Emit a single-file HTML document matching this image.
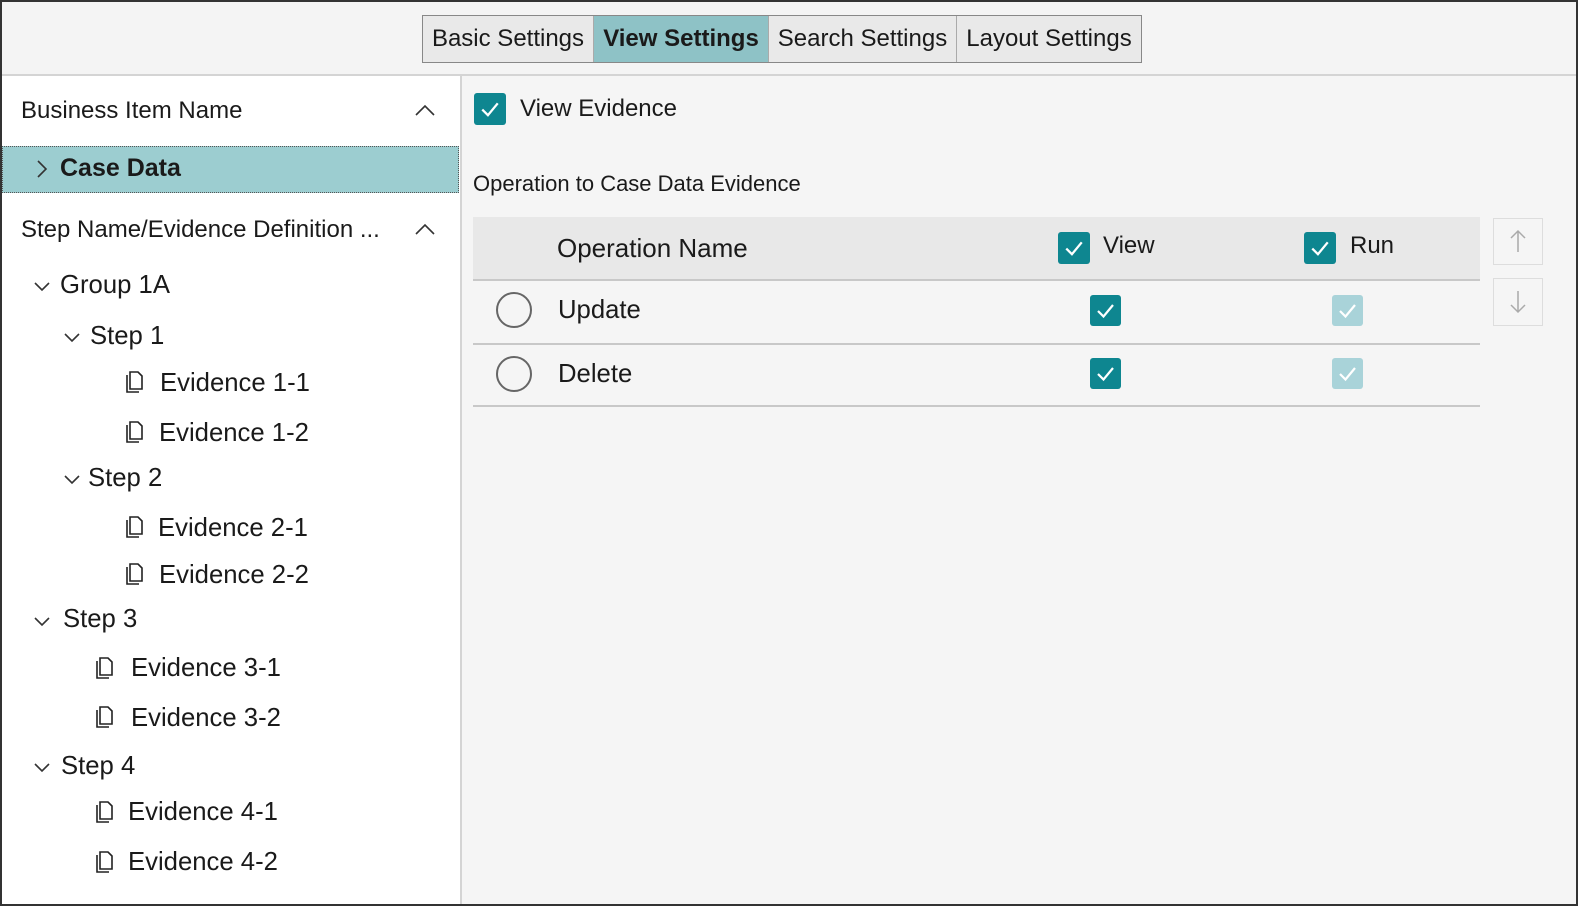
<!DOCTYPE html>
<html><head><meta charset="utf-8"><style>
*{margin:0;padding:0;box-sizing:border-box}
body{width:1578px;height:906px;position:relative;overflow:hidden;font-family:"Liberation Sans",sans-serif;color:#1a1a1a;background:#fff}
.a{position:absolute;white-space:nowrap}
.t{font-size:24px;line-height:30px}
.tr{font-size:25.7px;line-height:30px}
.cb{position:absolute;width:31px;height:31px;background:#0e8690;border-radius:3px}
.cb.l{background:#a9d3d9}
.cb svg{position:absolute;left:0;top:0}
</style></head><body>
<div class="a" style="left:0;top:0;width:1578px;height:906px;border:2px solid #333;z-index:10;pointer-events:none"></div>
<div class="a" style="left:0;top:0;width:1578px;height:76px;background:#f4f4f4;border-bottom:2px solid #d4d4d4"></div>
<div class="a" style="left:422px;top:15px;width:720px;height:48px;border:1px solid #888;background:#e9e9e9;display:flex;font-size:24px;line-height:46px">
<div style="width:171px;text-align:center;border-right:1px solid #aaa">Basic Settings</div>
<div style="width:175px;text-align:center;background:#8ec2c6;font-weight:bold;border-right:1px solid #aaa">View Settings</div>
<div style="width:188px;text-align:center;border-right:1px solid #aaa">Search Settings</div>
<div style="flex:1;text-align:center">Layout Settings</div>
</div>
<div class="a" style="left:460px;top:76px;width:1118px;height:830px;background:#f5f5f5;border-left:2px solid #d4d4d4"></div>

<div class="a t" style="left:21px;top:96px">Business Item Name</div>
<svg class="a" style="left:414px;top:102px" width="22" height="16"><path d="M2 13 L11 4 L20 13" fill="none" stroke="#333" stroke-width="1.6"/></svg>
<div class="a" style="left:2px;top:146px;width:457px;height:47px;background:#9ccdd0;border:1px dotted #555"></div>
<svg class="a" style="left:35px;top:159px" width="14" height="20"><path d="M3 2 L11 10 L3 18" fill="none" stroke="#333" stroke-width="1.6"/></svg>
<div class="a t" style="left:60px;top:153px;font-weight:bold;font-size:25px">Case Data</div>
<div class="a t" style="left:21px;top:215px">Step Name/Evidence Definition ...</div>
<svg class="a" style="left:414px;top:221px" width="22" height="16"><path d="M2 13 L11 4 L20 13" fill="none" stroke="#333" stroke-width="1.6"/></svg>

<svg width="0" height="0" style="position:absolute"><defs>
<symbol id="dn" viewBox="0 0 18 12"><path d="M2 3 L9 10 L16 3" fill="none" stroke="#333" stroke-width="1.6"/></symbol>
<symbol id="doc" viewBox="0 0 20 24"><path d="M5 2 H13 L17 6 V19 H5 Z" fill="none" stroke="#222" stroke-width="1.6"/><path d="M2 5 V22 H14" fill="none" stroke="#222" stroke-width="1.6"/></symbol>
<symbol id="ck" viewBox="0 0 31 31"><path d="M8 16 L13.5 21.5 L23 10" fill="none" stroke="#fff" stroke-width="2.2"/></symbol>
</defs></svg>

<svg class="a" style="left:33px;top:280px" width="18" height="12"><use href="#dn"/></svg><div class="a tr" style="left:60px;top:270px">Group 1A</div>
<svg class="a" style="left:63px;top:331px" width="18" height="12"><use href="#dn"/></svg><div class="a tr" style="left:90px;top:321px">Step 1</div>
<svg class="a" style="left:125px;top:370px" width="20" height="24"><use href="#doc"/></svg><div class="a tr" style="left:160px;top:368px">Evidence 1-1</div>
<svg class="a" style="left:125px;top:420px" width="20" height="24"><use href="#doc"/></svg><div class="a tr" style="left:159px;top:418px">Evidence 1-2</div>
<svg class="a" style="left:63px;top:473px" width="18" height="12"><use href="#dn"/></svg><div class="a tr" style="left:88px;top:463px">Step 2</div>
<svg class="a" style="left:125px;top:515px" width="20" height="24"><use href="#doc"/></svg><div class="a tr" style="left:158px;top:513px">Evidence 2-1</div>
<svg class="a" style="left:125px;top:562px" width="20" height="24"><use href="#doc"/></svg><div class="a tr" style="left:159px;top:560px">Evidence 2-2</div>
<svg class="a" style="left:33px;top:615px" width="18" height="12"><use href="#dn"/></svg><div class="a tr" style="left:63px;top:604px">Step 3</div>
<svg class="a" style="left:95px;top:656px" width="20" height="24"><use href="#doc"/></svg><div class="a tr" style="left:131px;top:653px">Evidence 3-1</div>
<svg class="a" style="left:95px;top:705px" width="20" height="24"><use href="#doc"/></svg><div class="a tr" style="left:131px;top:703px">Evidence 3-2</div>
<svg class="a" style="left:33px;top:761px" width="18" height="12"><use href="#dn"/></svg><div class="a tr" style="left:61px;top:751px">Step 4</div>
<svg class="a" style="left:95px;top:800px" width="20" height="24"><use href="#doc"/></svg><div class="a tr" style="left:128px;top:797px">Evidence 4-1</div>
<svg class="a" style="left:95px;top:850px" width="20" height="24"><use href="#doc"/></svg><div class="a tr" style="left:128px;top:847px">Evidence 4-2</div>

<div class="cb" style="left:474px;top:93px;width:32px;height:32px"><svg width="32" height="32"><use href="#ck"/></svg></div>
<div class="a t" style="left:520px;top:94px">View Evidence</div>
<div class="a" style="left:473px;top:170px;font-size:22px;line-height:28px">Operation to Case Data Evidence</div>

<div class="a" style="left:473px;top:217px;width:1007px;height:64px;background:#e8e8e8;border-bottom:2px solid #c8c8c8"></div>
<div class="a" style="left:557px;top:232px;font-size:26px;line-height:32px">Operation Name</div>
<div class="cb" style="left:1058px;top:232px;width:32px;height:32px"><svg width="32" height="32"><use href="#ck"/></svg></div>
<div class="a t" style="left:1103px;top:231px">View</div>
<div class="cb" style="left:1304px;top:232px;width:32px;height:32px"><svg width="32" height="32"><use href="#ck"/></svg></div>
<div class="a t" style="left:1350px;top:231px">Run</div>

<div class="a" style="left:473px;top:343px;width:1007px;height:2px;background:#c8c8c8"></div>
<div class="a" style="left:473px;top:405px;width:1007px;height:2px;background:#c8c8c8"></div>
<div class="a" style="left:496px;top:292px;width:36px;height:36px;border:2px solid #666;border-radius:50%"></div>
<div class="a" style="left:496px;top:356px;width:36px;height:36px;border:2px solid #666;border-radius:50%"></div>
<div class="a tr" style="left:558px;top:295px">Update</div>
<div class="a tr" style="left:558px;top:359px">Delete</div>
<div class="cb" style="left:1090px;top:295px"><svg width="31" height="31"><use href="#ck"/></svg></div>
<div class="cb l" style="left:1332px;top:295px"><svg width="31" height="31"><use href="#ck"/></svg></div>
<div class="cb" style="left:1090px;top:358px"><svg width="31" height="31"><use href="#ck"/></svg></div>
<div class="cb l" style="left:1332px;top:358px"><svg width="31" height="31"><use href="#ck"/></svg></div>

<div class="a" style="left:1493px;top:218px;width:50px;height:47px;border:1px solid #ddd"><svg width="48" height="45"><path d="M24 12 V33 M17 19 L24 12 L31 19" fill="none" stroke="#aaa" stroke-width="1.5"/></svg></div>
<div class="a" style="left:1493px;top:278px;width:50px;height:48px;border:1px solid #ddd"><svg width="48" height="46"><path d="M24 12 V33 M17 26 L24 33 L31 26" fill="none" stroke="#aaa" stroke-width="1.5"/></svg></div>
</body></html>
